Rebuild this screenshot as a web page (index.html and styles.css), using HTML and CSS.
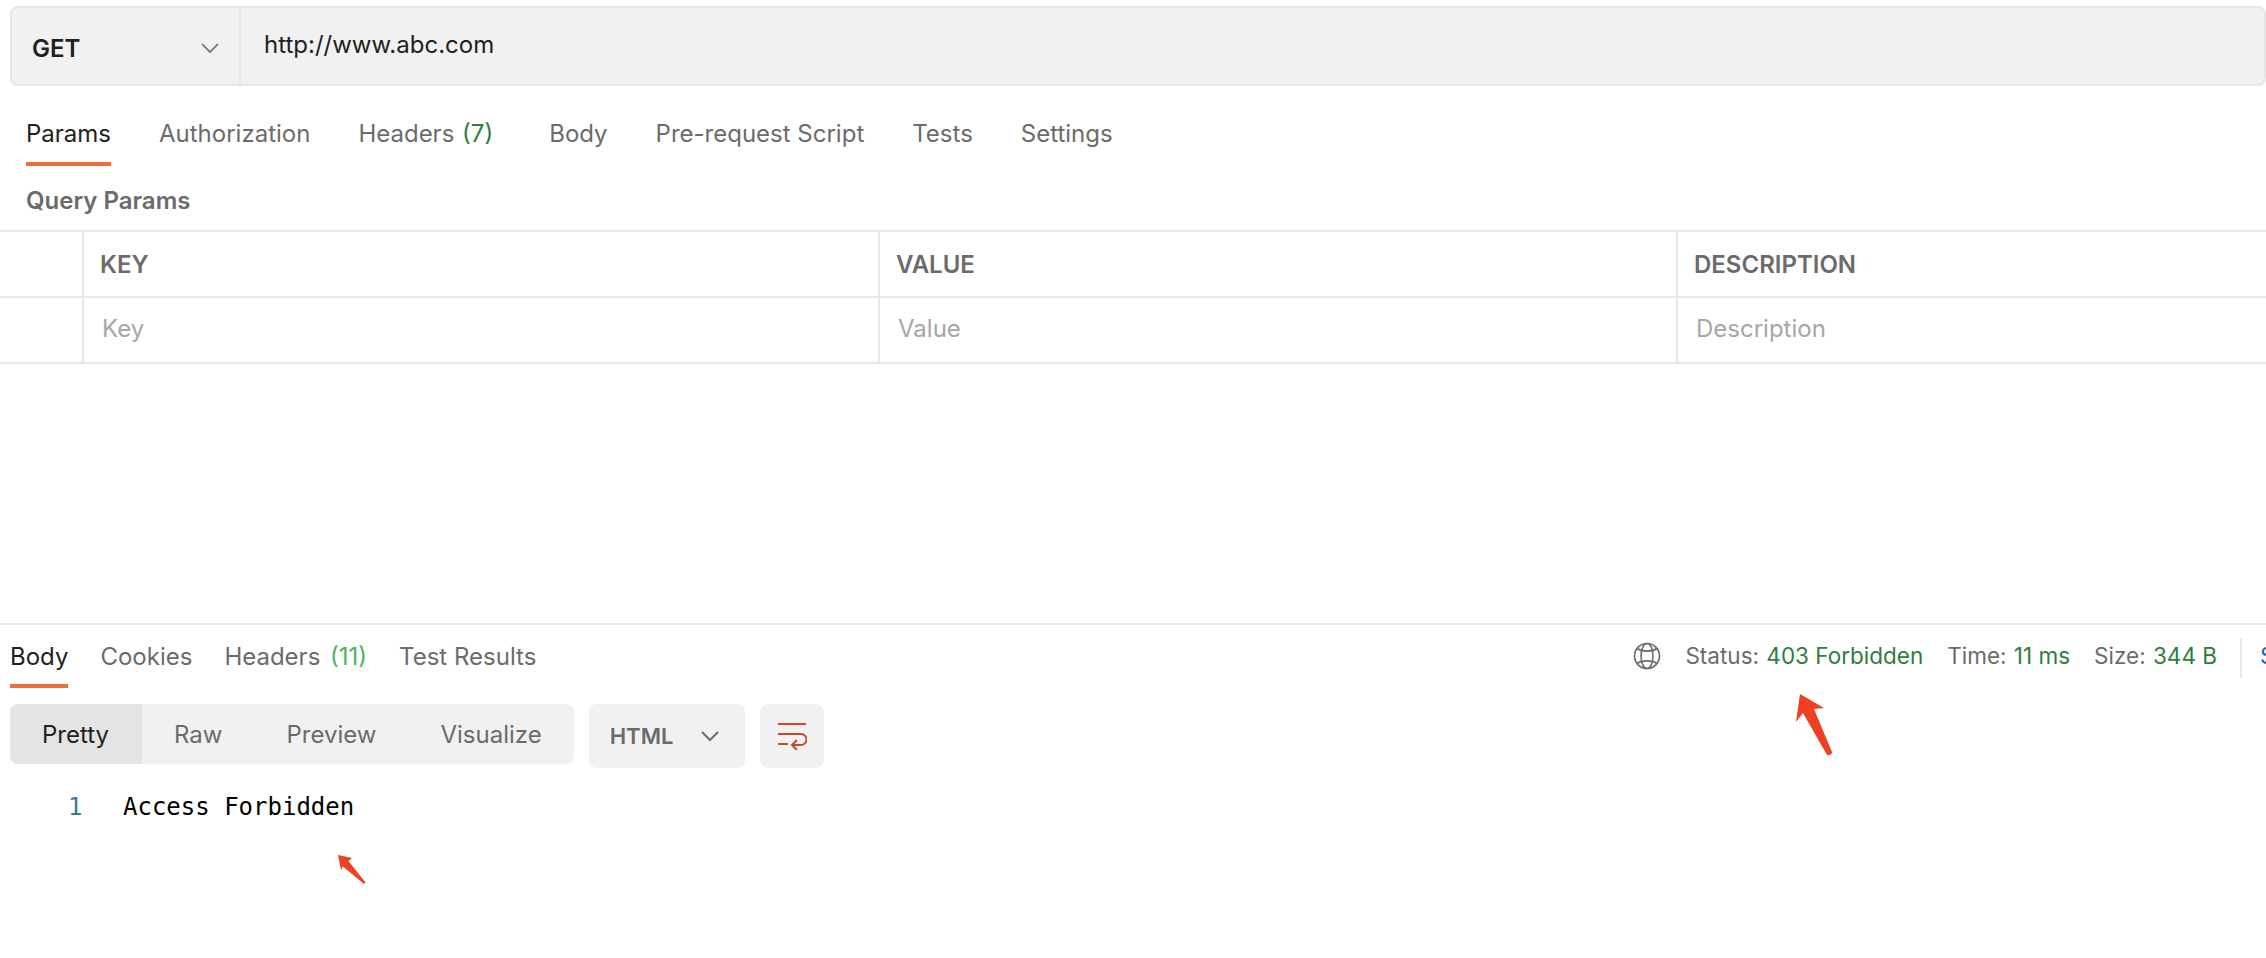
FILE: index.html
```html
<!DOCTYPE html>
<html lang="en">
<head>
<meta charset="utf-8">
<title>Request</title>
<link rel="stylesheet" href="styles.css">
</head>
<body>
<div class="url-bar">
  <div class="method"><span>GET</span>
    <svg class="chev" width="18" height="10" viewBox="0 0 18 10"><path d="M1 1l8 8 8-8" fill="none" stroke="#6b6b6b" stroke-width="1.7"/></svg>
  </div>
  <div class="url">http://www.abc.com</div>
</div>
<nav class="tabs req-tabs">
  <span class="tab active">Params</span>
  <span class="tab">Authorization</span>
  <span class="tab tab-wide">Headers <em class="count">(7)</em></span>
  <span class="tab">Body</span>
  <span class="tab">Pre-request Script</span>
  <span class="tab">Tests</span>
  <span class="tab">Settings</span>
</nav>
<h2 class="section">Query Params</h2>
<div class="table">
  <div class="row head"><div class="cell check"></div><div class="cell">KEY</div><div class="cell">VALUE</div><div class="cell">DESCRIPTION</div></div>
  <div class="row body"><div class="cell check"></div><div class="cell ph">Key</div><div class="cell ph">Value</div><div class="cell ph">Description</div></div>
</div>
<section class="response">
  <div class="res-top">
    <nav class="tabs res-tabs">
      <span class="tab active">Body</span>
      <span class="tab">Cookies</span>
      <span class="tab">Headers <em class="count light">(11)</em></span>
      <span class="tab">Test Results</span>
    </nav>
    <div class="meta">
      <svg class="globe" width="28" height="28" viewBox="0 0 28 28" fill="none" stroke="#6b6b6b" stroke-width="1.6"><circle cx="14" cy="14" r="12.5"/><ellipse cx="14" cy="14" rx="6" ry="12.5"/><path d="M4 6.5c5 3.5 15 3.5 20 0M4 21.5c5-3.5 15-3.5 20 0"/></svg>
      <span class="stat">Status: <b>403 Forbidden</b></span>
      <span class="stat">Time: <b>11 ms</b></span>
      <span class="stat">Size: <b>344 B</b></span>
      <span class="sep"></span>
      <span class="save">S</span>
    </div>
  </div>
  <div class="toolbar">
    <div class="segments">
      <span class="seg on">Pretty</span><span class="seg">Raw</span><span class="seg">Preview</span><span class="seg">Visualize</span>
    </div>
    <div class="lang"><span>HTML</span>
      <svg width="18" height="11" viewBox="0 0 18 11"><path d="M1 1l8 8 8-8" fill="none" stroke="#6b6b6b" stroke-width="2"/></svg>
    </div>
    <div class="wrap">
      <svg width="30" height="28" viewBox="0 0 30 28" fill="none" stroke="#c8492a" stroke-width="2"><path d="M1 2h28M1 12h23a5.5 5.5 0 0 1 0 11H15M1 22h10M20 18l-5 5 5 5"/></svg>
    </div>
  </div>
  <div class="code"><span class="ln">1</span><span class="src">Access Forbidden</span></div>
</section>
<svg class="arrow arrow-a" width="32" height="32" viewBox="0 0 32 32"><path d="M1 0L15 3 11.5 6 28.500 27.500 27 29 6 11.500 4 15z" fill="#ee4023"/></svg>
<svg class="arrow arrow-b" width="40" height="66" viewBox="0 0 40 66"><path d="M5 0L29 14 19 15 37 58c.6 2-3.500 4-5 3L8 19 1 28z" fill="#ee4023"/></svg>
</body>
</html>
```
FILE: styles.css
```css
* { box-sizing: border-box; }
html, body { margin: 0; padding: 0; }
body {
  width: 2266px;
  height: 958px;
  overflow: hidden;
  background: #fff;
  font-family: Inter, "Liberation Sans", sans-serif;
  font-size: 24px;
  color: #6b6b6b;
  position: relative;
}
.url-bar {
  display: flex;
  height: 80px;
  margin: 6px 0 0 10px;
  background: #f1f1f1;
  border: 2px solid #e6e6e6;
  border-radius: 8px;
}
.method {
  width: 229px;
  padding: 4px 20px 0 20px;
  display: flex;
  align-items: center;
  justify-content: space-between;
  border-right: 2px solid #e6e6e6;
  font-weight: 600;
  color: #212121;
}
.url {
  padding-left: 23px;
  line-height: 74px;
  color: #212121;
}
.tabs { display: flex; }
.tab { display: block; }
.tab em { font-style: normal; }
.count { color: #2f7d3b; margin-left: 1px; }
.count.light { color: #4cb35f; margin-left: 3px; }
.req-tabs {
  margin: 33px 0 0 26px;
  gap: 48px;
  height: 47px;
}
.tab-wide { margin-right: 8px; }
.active {
  color: #212121;
  border-bottom: 4px solid #f26b3a;
}
.section {
  margin: 20px 0 0 26px;
  font-size: 24px;
  font-weight: 600;
  line-height: 30px;
  color: #6b6b6b;
}
.table {
  margin-top: 14px;
  border-top: 2px solid #e8e8e8;
}
.row {
  display: grid;
  grid-template-columns: 84px 796px 798px 1fr;
  height: 66px;
  border-bottom: 2px solid #e8e8e8;
}
.cell {
  display: flex;
  align-items: center;
  padding-left: 16px;
  border-right: 2px solid #e8e8e8;
}
.cell:last-child { border-right: 0; }
.head .cell { font-weight: 600; color: #6b6b6b; }
.ph { color: #a6a6a6; padding: 0 0 3px 18px; }
.response {
  margin-top: 259px;
  border-top: 2px solid #e8e8e8;
}
.res-top {
  display: flex;
  justify-content: space-between;
  height: 62px;
  padding: 17px 0 0 10px;
}
.res-tabs { gap: 32px; height: 46px; }
.meta {
  display: flex;
  align-items: flex-start;
  gap: 24px;
  font-size: 22.5px;
}
.globe { margin-right: 0; margin-top: 0; }
.stat { white-space: nowrap; }
.stat b { font-weight: 400; color: #2f7d3b; margin-left: 1px; }
.sep {
  width: 2px;
  height: 40px;
  margin: -4px 0 0 -1px;
  background: #e8e8e8;
}
.save { color: #1f5fcc; margin-left: -6px; width: 6px; }
.toolbar {
  display: flex;
  align-items: flex-start;
  gap: 15px;
  padding: 17px 0 0 10px;
}
.segments {
  display: flex;
  height: 60px;
  background: #f1f1f1;
  border-radius: 8px;
  overflow: hidden;
}
.seg {
  display: flex;
  align-items: center;
  padding: 0 32px;
}
.seg.on { background: #e4e4e4; color: #212121; padding-right: 33px; }
.lang {
  display: flex;
  align-items: center;
  gap: 28px;
  width: 156px;
  height: 64px;
  padding: 0 21px;
  background: #f1f1f1;
  border-radius: 8px;
  font-size: 22px;
  font-weight: 600;
}
.wrap {
  display: flex;
  align-items: center;
  justify-content: center;
  width: 64px;
  height: 64px;
  background: #f1f1f1;
  border-radius: 8px;
}
.code {
  display: flex;
  margin-top: 24px;
  font-family: "DejaVu Sans Mono", "Liberation Mono", monospace;
  font-size: 24px;
  line-height: 30px;
  color: #000;
}
.ln { width: 123px; padding-left: 68px; color: #3b7a99; }
.arrow { position: absolute; }
.arrow-a { left: 337px; top: 855px; }
.arrow-b { left: 1795px; top: 694px; }
```
